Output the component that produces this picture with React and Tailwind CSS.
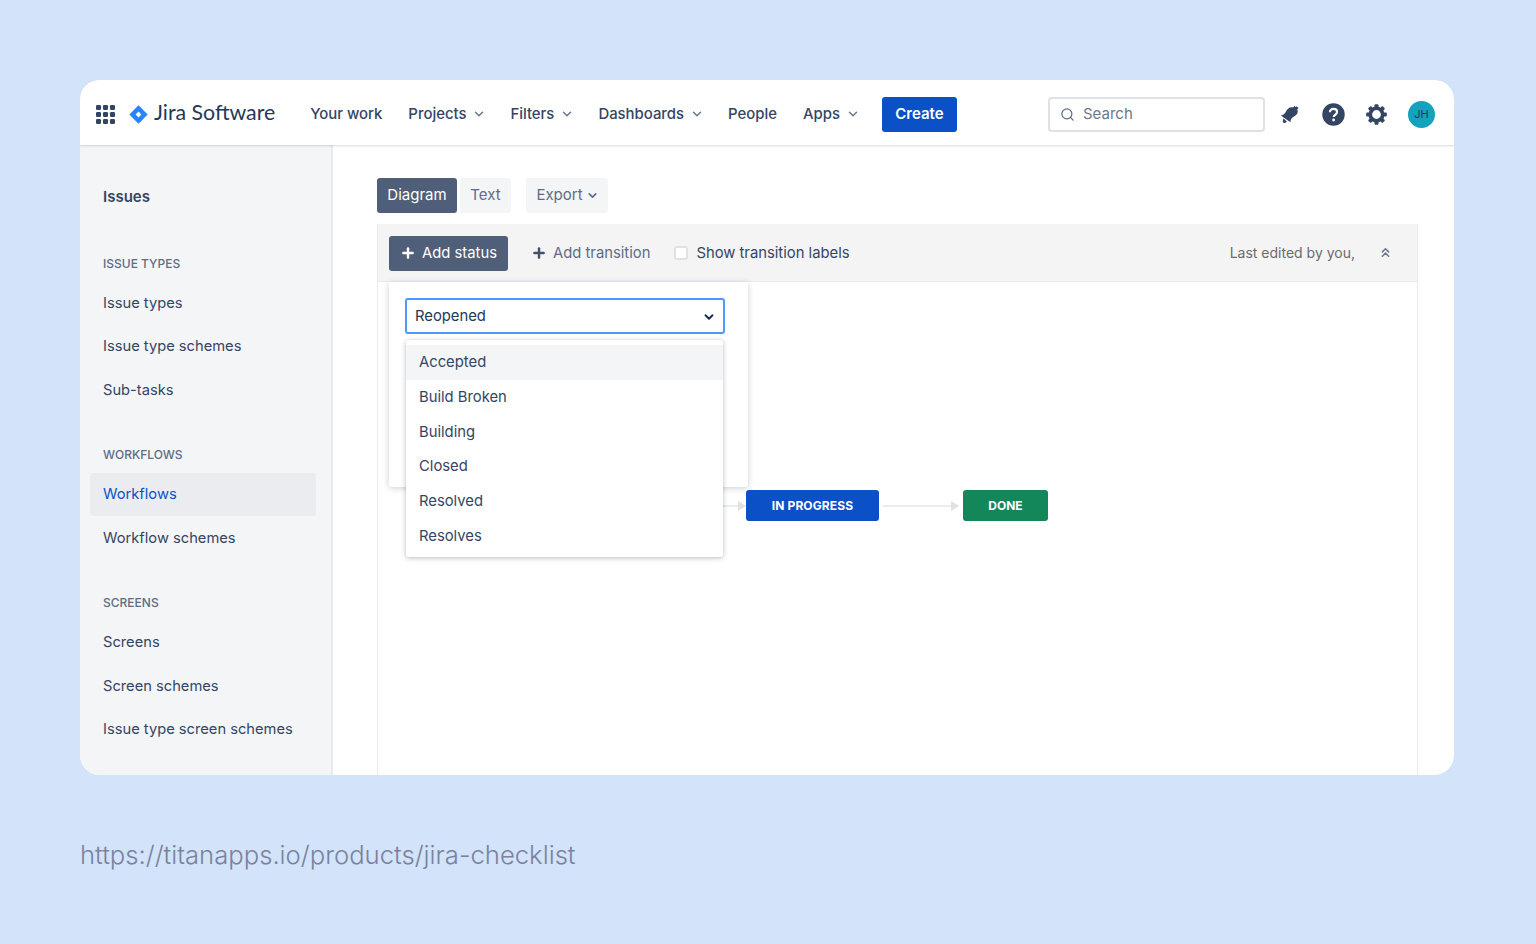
import React from 'react';
import { ChevronDown, ChevronsUp, Plus, Search } from 'lucide-react';

const NAV = [
  { label: 'Your work' },
  { label: 'Projects', menu: true },
  { label: 'Filters', menu: true },
  { label: 'Dashboards', menu: true },
  { label: 'People' },
  { label: 'Apps', menu: true },
];

const SECTIONS = [
  { title: 'ISSUE TYPES', items: ['Issue types', 'Issue type schemes', 'Sub-tasks'] },
  { title: 'WORKFLOWS', items: ['Workflows', 'Workflow schemes'] },
  { title: 'SCREENS', items: ['Screens', 'Screen schemes', 'Issue type screen schemes'] },
];

const STATUSES = ['Accepted', 'Build Broken', 'Building', 'Closed', 'Resolved', 'Resolves'];

const GridIcon = () => (
  <svg width="19" height="19" viewBox="0 0 19 19" fill="#344563">
    {[0, 7, 14].map((y) =>
      [0, 7, 14].map((x) => <rect key={`${x}-${y}`} x={x} y={y} width="5" height="5" rx="1.2" />)
    )}
  </svg>
);

const JiraMark = () => (
  <svg width="19" height="19" viewBox="0 0 19 19" className="shrink-0">
    <path d="M9.5 0.3 L18.7 9.5 L9.5 18.7 L0.3 9.5 Z" fill="#2684ff" strokeLinejoin="round" />
    <path d="M9.5 6.6 L12.4 9.5 L9.5 12.4 L6.6 9.5 Z" fill="#fff" />
  </svg>
);

const BellIcon = () => (
  <svg width="20" height="20" viewBox="0 0 20 20" fill="#344563">
    <path d="M0.8 10.4 C3.4 10.2 4.8 9 6 6.6 C7.4 3.6 10.2 1.6 13 2.6 L14.6 1 L15.6 2 L16.4 1.3 L18.6 3.1 L17.2 4.6 C18.6 7.4 17 10 14 11.6 C11.6 12.9 10.6 14.4 10.4 17.2 Z" />
    <path d="M3.6 13.4 L6.8 16.6 C6 18.2 3.8 18.2 3.2 17.4 C2.6 16.6 2.8 14.4 3.6 13.4 Z" />
  </svg>
);

const HelpIcon = () => (
  <svg width="23" height="23" viewBox="0 0 23 23">
    <circle cx="11.5" cy="11.5" r="11.2" fill="#344563" />
    <path d="M7.9 9.2 C7.9 7.1 9.5 5.9 11.5 5.9 C13.5 5.9 15.1 7.1 15.1 9 C15.1 11.4 11.9 11.6 11.7 14" fill="none" stroke="#fff" strokeWidth="2.2" />
    <circle cx="11.6" cy="17" r="1.4" fill="#fff" />
  </svg>
);

// thick ring with eight short teeth
const GearIcon = () => (
  <svg width="21" height="21" viewBox="0 0 21 21" className="ml-[21px]">
    <circle cx="10.5" cy="10.5" r="6.2" fill="none" stroke="#344563" strokeWidth="3.6" />
    {[0, 45, 90, 135, 180, 225, 270, 315].map((deg) => (
      <rect key={deg} x="8.5" y="0.2" width="4" height="4" rx="1" fill="#344563" transform={`rotate(${deg} 10.5 10.5)`} />
    ))}
  </svg>
);

const Header = () => (
  <header className="relative z-20 flex h-[65px] shrink-0 items-center bg-white pl-[16px] pr-[19px] pt-[4px] shadow-[0_1px_2px_rgba(9,30,66,0.16)]">
    <GridIcon />
    <div className="ml-[14px] flex items-center gap-[6px]">
      <JiraMark />
      <span className="-mt-[3px] font-['Lato'] text-[21.3px] leading-none text-[#253858]">Jira Software</span>
    </div>
    <nav className="ml-[35px] flex items-center gap-[26px] text-[14.9px] font-medium text-[#344563]">
      {NAV.map((item) => (
        <div key={item.label} className="flex items-center">
          <span>{item.label}</span>
          {item.menu && <ChevronDown size={14} strokeWidth={2.5} className="-mr-[2px] ml-[6px] text-[#6b778c]" />}
        </div>
      ))}
    </nav>
    <button className="ml-[24px] h-[35px] w-[75px] rounded-[3px] bg-[#0c50c8] text-[15px] font-semibold text-white">Create</button>
    <div className="ml-auto flex h-[35px] w-[217px] items-center gap-[8px] rounded-[4px] border-2 border-[#dfe1e6] bg-white pl-[10px] text-[15px] text-[#6b778c]">
      <Search size={15} strokeWidth={2} className="text-[#5e6c84]" />
      <span>Search</span>
    </div>
    <div className="ml-[15px] flex items-center">
      <BellIcon />
      <div className="ml-[22px]"><HelpIcon /></div>
      <GearIcon />
      <div className="ml-[21px] flex h-[27px] w-[27px] items-center justify-center rounded-full bg-[#14a2bc] text-[11px] text-[#253858]">JH</div>
    </div>
  </header>
);

const Sidebar = () => (
  <aside className="w-[253px] shrink-0 border-r-2 border-[#e8eaee] bg-[#f4f5f7] pl-[10px] pr-[15px] pt-[40px] text-[#344563]">
    <div className="pl-[13px] text-[15px] font-semibold leading-[24px]">Issues</div>
    {SECTIONS.map((section, i) => (
      <div key={section.title} className={i === 0 ? 'mt-[43px]' : 'mt-[31px]'}>
        <div className="pl-[13px] text-[12px] font-medium leading-[24px] text-[#5e6c84]">{section.title}</div>
        <ul className={i === 0 ? 'mt-[5px]' : 'mt-[6px]'}>
          {section.items.map((item) => (
            <li
              key={item}
              className={`flex h-[43.5px] items-center rounded-[3px] pl-[13px] text-[14.7px] ${item === 'Workflows' ? 'bg-[#ebecf0] text-[#0c50c8]' : ''}`}
            >
              {item}
            </li>
          ))}
        </ul>
      </div>
    ))}
  </aside>
);

const Toolbar = () => (
  <div className="flex h-[58px] items-center border-b border-[#ebecf0] bg-[#f4f4f5] pl-[11px] pr-[24px] pt-[1px] text-[14.8px]">
    <button className="flex h-[35px] w-[119px] items-center justify-center gap-[6px] rounded-[3px] bg-[#505f79] text-white">
      <Plus size={16} strokeWidth={3.6} />
      Add status
    </button>
    <div className="ml-[23px] flex items-center gap-[6px] text-[#5e6c84]">
      <Plus size={16} strokeWidth={3.6} className="text-[#42526e]" />
      Add transition
    </div>
    <span className="ml-[24px] h-[14px] w-[14px] rounded-[3px] border-2 border-[#dfe1e6] bg-white" />
    <span className="ml-[8px] text-[#344563]">Show transition labels</span>
    <span className="-mt-px ml-auto text-[14px] text-[#6b6b6b]">Last edited by you,</span>
    <ChevronsUp size={15} strokeWidth={2.5} className="-mt-px ml-[23px] text-[#6b778c]" />
  </div>
);

const Arrow = ({ width }) => (
  <div className="flex items-center" style={{ width }}>
    <div className="h-[2px] flex-1 bg-[#ebecf0]" />
    <div className="h-0 w-0 border-y-[5px] border-l-[8px] border-y-transparent border-l-[#dfe1e6]" />
  </div>
);

const StatusPopup = () => (
  <>
    <div className="absolute left-[11px] top-0 z-10 h-[205px] w-[359px] rounded-b-[3px] bg-white px-[16px] pt-[16px] shadow-[0_1px_6px_rgba(9,30,66,0.22)]">
      <div className="flex h-[36px] w-[320px] items-center justify-between rounded-[3px] border-2 border-[#4c9aff] bg-white pl-[8px] pr-[7px] pt-[1px] text-[14.8px] text-[#253858]">
        Reopened
        <ChevronDown size={14} strokeWidth={3.2} className="text-[#172b4d]" />
      </div>
    </div>
    <ul className="absolute left-[28px] top-[58px] z-10 w-[317px] rounded-[3px] bg-white pb-[4px] pt-[5px] text-[14.8px] text-[#344563] shadow-[0_1px_5px_rgba(9,30,66,0.3)]">
      {STATUSES.map((status, i) => (
        <li key={status} className={`flex h-[34.7px] items-center pl-[13px] ${i === 0 ? 'bg-[#f4f5f7]' : ''}`}>
          {status}
        </li>
      ))}
    </ul>
  </>
);

const Diagram = () => (
  <div className="relative flex-1">
    <StatusPopup />
    <div className="absolute left-[345px] top-[208px] flex items-center">
      <Arrow width={23} />
      <div className="flex h-[31px] w-[133px] items-center justify-center rounded-[3px] bg-[#0c50c8] text-[12px] font-bold tracking-[0.1px] text-white">IN PROGRESS</div>
      <div className="ml-[4px]"><Arrow width={76} /></div>
      <div className="ml-[4px] flex h-[31px] w-[85px] items-center justify-center rounded-[3px] bg-[#13865a] text-[12px] font-bold text-white">DONE</div>
    </div>
  </div>
);

export default function App() {
  return (
    <div className="flex h-[944px] flex-col bg-[#d3e3f9] pl-[80px] pr-[82px] pt-[80px] font-['Inter',sans-serif]">
      <div className="flex h-[695px] flex-col overflow-hidden rounded-[20px] bg-white">
        <Header />
        <div className="flex min-h-0 flex-1">
          <Sidebar />
          <main className="flex min-w-0 flex-1 flex-col pl-[44px] pr-[36px] pt-[33px]">
            <div className="flex items-center text-[15px]">
              <button className="h-[35px] w-[80px] rounded-[3px] bg-[#505f79] text-white">Diagram</button>
              <button className="ml-[3px] h-[35px] w-[51px] rounded-[3px] bg-[#f4f5f7] text-[#5e6c84]">Text</button>
              <button className="ml-[15px] flex h-[35px] w-[82px] items-center justify-center gap-[3px] rounded-[3px] bg-[#f4f5f7] pl-[1px] text-[#5e6c84]">
                Export
                <ChevronDown size={13} strokeWidth={3} />
              </button>
            </div>
            <section className="mt-[11px] flex flex-1 flex-col border-x border-[#ebecf0]">
              <Toolbar />
              <Diagram />
            </section>
          </main>
        </div>
      </div>
      <p className="mt-[62px] text-[25.65px] font-light leading-[36px] text-[#7a829e]">https://titanapps.io/products/jira-checklist</p>
    </div>
  );
}
